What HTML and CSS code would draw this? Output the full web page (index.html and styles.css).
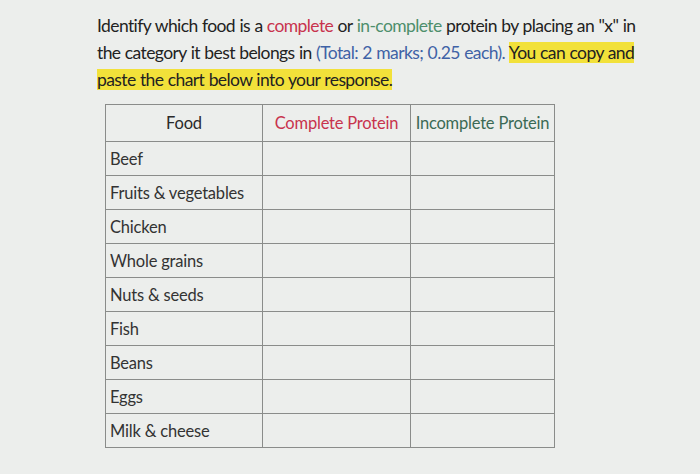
FILE: index.html
```html
<!DOCTYPE html>
<html>
<head>
<meta charset="utf-8">
<link rel="stylesheet" href="styles.css">
</head>
<body>
<div class="page">
  <p class="question">Identify which food is a <span class="red">complete</span> or <span class="green">in-complete</span> protein by placing an "x" in the category it best belongs in <span class="blue">(Total: 2 marks; 0.25 each).</span> <span class="hl">You can copy and paste the chart below into your response.</span></p>
  <table class="chart">
    <thead>
      <tr><th class="food">Food</th><th class="red">Complete Protein</th><th class="green2">Incomplete Protein</th></tr>
    </thead>
    <tbody>
      <tr><td>Beef</td><td></td><td></td></tr>
      <tr><td>Fruits &amp; vegetables</td><td></td><td></td></tr>
      <tr><td>Chicken</td><td></td><td></td></tr>
      <tr><td>Whole grains</td><td></td><td></td></tr>
      <tr><td>Nuts &amp; seeds</td><td></td><td></td></tr>
      <tr><td>Fish</td><td></td><td></td></tr>
      <tr><td>Beans</td><td></td><td></td></tr>
      <tr><td>Eggs</td><td></td><td></td></tr>
      <tr><td>Milk &amp; cheese</td><td></td><td></td></tr>
    </tbody>
  </table>
</div>
</body>
</html>
```
FILE: styles.css
```css
html, body {
  margin: 0;
  padding: 0;
  background: #eceeec;
}
body {
  width: 700px;
  height: 474px;
  overflow: hidden;
  font-family: Lato, "Open Sans", sans-serif;
  color: #2a2a2a;
}
.page {
  padding: 12px 0 0 97px;
}
.question {
  margin: 0;
  width: 560px;
  font-size: 17.5px;
  letter-spacing: -0.6px;
  word-spacing: 0.5px;
  line-height: 27px;
  color: #222;
}
.red { color: #c8334d; }
.green { color: #4e8f6c; }
.green2 { color: #3b6a55; }
.blue { color: #3f62a6; }
.hl { background: #f2e13a; }
.chart {
  margin: 11px 0 0 8px;
  border-collapse: collapse;
  font-size: 16.5px;
  color: #333;
  table-layout: fixed;
}
.chart th, .chart td {
  border: 1px solid #8a8c8a;
  padding: 0 4px;
  height: 33px;
  text-align: left;
  font-weight: normal;
  white-space: nowrap;
  letter-spacing: -0.2px;
}
.chart th {
  height: 36px;
  font-size: 16.5px;
  text-align: center;
}
.chart th.food { color: #2a2a2a; }
.chart th:nth-child(1), .chart td:nth-child(1) { width: 148px; }
.chart th:nth-child(2), .chart td:nth-child(2) { width: 139px; }
.chart th:nth-child(3), .chart td:nth-child(3) { width: 135px; }
```
